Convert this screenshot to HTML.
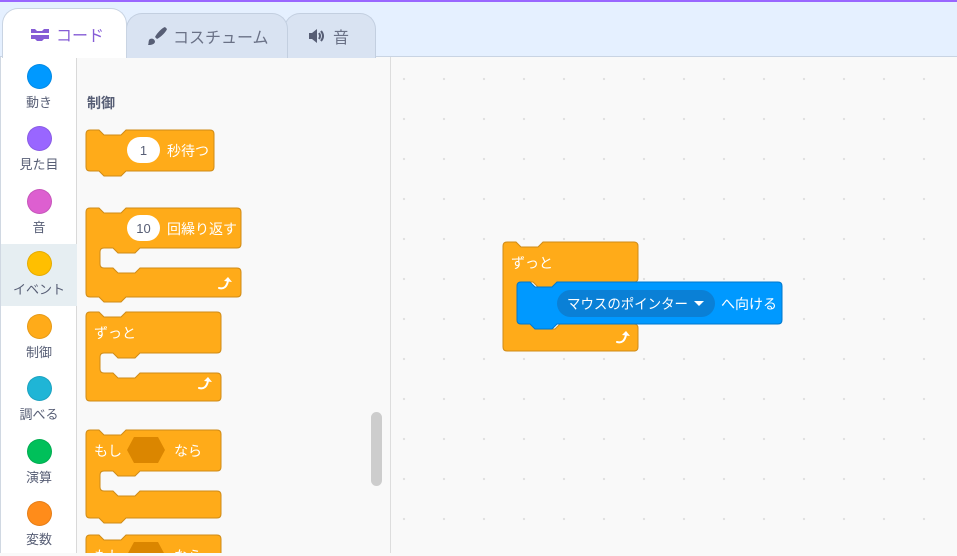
<!DOCTYPE html>
<html><head><meta charset="utf-8"><style>
*{margin:0;padding:0;box-sizing:border-box}
body{width:957px;height:553px;overflow:hidden;position:relative;background:#f9f9f9;font-family:"Liberation Sans","Noto Sans CJK JP",sans-serif}
#top{position:absolute;left:0;top:0;width:957px;height:57px;background:#e5f0ff;border-top:2px solid #9966ff;border-bottom:1px solid #c9d4e3}
.tab{position:absolute;border:1px solid #c3cfe0;border-bottom:none;border-radius:16px 16px 0 0;background:#d9e3f2;color:#6a7186;font-size:16px;display:flex;align-items:center}
#cat{position:absolute;left:0;top:57px;width:77px;height:496px;background:#fff;border-right:1px solid #d9d9d9;border-left:1px solid #d0d8e2}
.c{position:absolute;left:0;width:76px;height:62px;text-align:center;font-size:13px;color:#575e75}
.c i{display:block;width:25px;height:25px;border-radius:50%;margin:7px auto 3px;border:1px solid rgba(0,0,0,.1)}
#ws{position:absolute;left:390px;top:57px;width:567px;height:496px;border-left:1px solid #ddd;background-color:#f9f9f9;background-image:radial-gradient(circle,#e0e0e0 1px,transparent 1.3px);background-size:40px 40px;background-position:-7px 2px}
svg{position:absolute;left:0;top:0}
</style></head><body>
<div id="top">
 <div class="tab" style="left:2px;top:6px;width:125px;height:50px;background:#fff;color:#855cd6;z-index:3;border-color:#c9d4e3">
  <svg style="position:static;margin-left:27px;margin-right:6px" width="20" height="16" viewBox="0 0 20 16"><path d="M1 3h4l2 2h5l2-2h5v4h-18z M1 9h18v4h-5l-2 2h-5l-2-2h-4z" fill="#855cd6"/></svg>コード</div>
 <div class="tab" style="left:126px;top:11px;width:162px;height:45px;z-index:2">
  <svg style="position:static;margin-left:20px;margin-right:6px" width="20" height="20" viewBox="0 0 20 20"><path d="M18 1c-3 1-8 6-10 10l2 2c4-2 9-7 10-10z M3 13c2-1 5 0 5 3-1 3-5 3-7 3 1-1 0-5 2-6z" fill="#575e75"/></svg>コスチューム</div>
 <div class="tab" style="left:284px;top:11px;width:92px;height:45px;z-index:1">
  <svg style="position:static;margin-left:22px;margin-right:6px" width="20" height="16" viewBox="0 0 20 16"><path d="M2 5h3l5-4v14l-5-4h-3z" fill="#575e75"/><path d="M12 5q2 3 0 6M14 3q4 5 0 10" stroke="#575e75" stroke-width="2" fill="none"/></svg>音</div>
</div>
<div id="cat">
 <div class="c" style="top:0"><i style="background:#0099ff"></i>動き</div>
 <div class="c" style="top:62px"><i style="background:#9966ff"></i>見た目</div>
 <div class="c" style="top:125px"><i style="background:#dd5fd0"></i>音</div>
 <div class="c" style="top:187px;background:#e6eef2"><i style="background:#ffbf00"></i>イベント</div>
 <div class="c" style="top:250px"><i style="background:#ffab19"></i>制御</div>
 <div class="c" style="top:312px"><i style="background:#1fb5d6"></i>調べる</div>
 <div class="c" style="top:375px"><i style="background:#00c05a"></i>演算</div>
 <div class="c" style="top:437px"><i style="background:#ff8c1a"></i>変数</div>
</div>
<div id="ws"></div>
<svg width="957" height="553" viewBox="0 0 957 553" font-family="Liberation Sans, Noto Sans CJK JP, sans-serif">
<text x="87" y="108" font-size="14" font-weight="bold" fill="#575e75">制御</text>
<g fill="#ffab19" stroke="#cf8b17">
<path d="M86,134 Q86,130 90,130 H99 L104,135 H121 L126,130 H210 Q214,130 214,134 V167 Q214,171 210,171 H126 L121,176 H104 L99,171 H90 Q86,171 86,167 Z"/>
<path d="M86,212 Q86,208 90,208 H99 L104,213 H121 L126,208 H237 Q241,208 241,212 V244 Q241,248 237,248 H140 L135,253 H118 L113,248 H104 Q100,248 100,252 V264 Q100,268 104,268 H113 L118,273 H135 L140,268 H237 Q241,268 241,272 V293 Q241,297 237,297 H126 L121,302 H104 L99,297 H90 Q86,297 86,293 Z"/>
<path d="M86,316 Q86,312 90,312 H99 L104,317 H121 L126,312 H217 Q221,312 221,316 V349 Q221,353 217,353 H140 L135,358 H118 L113,353 H104 Q100,353 100,357 V369 Q100,373 104,373 H113 L118,378 H135 L140,373 H217 Q221,373 221,377 V397 Q221,401 217,401 H90 Q86,401 86,397 Z"/>
<path d="M86,434 Q86,430 90,430 H99 L104,435 H121 L126,430 H217 Q221,430 221,434 V467 Q221,471 217,471 H140 L135,476 H118 L113,471 H104 Q100,471 100,475 V487 Q100,491 104,491 H113 L118,496 H135 L140,491 H217 Q221,491 221,495 V514 Q221,518 217,518 H126 L121,523 H104 L99,518 H90 Q86,518 86,514 Z"/>
<path d="M86,539 Q86,535 90,535 H99 L104,540 H121 L126,535 H217 Q221,535 221,539 V560 H86 Z"/>
<path d="M503,246 Q503,242 507,242 H516 L521,247 H538 L543,242 H634 Q638,242 638,246 V278 Q638,282 634,282 H560 L555,287 H538 L533,282 H521 Q517,282 517,286 V320 Q517,324 521,324 H533 L538,329 H555 L560,324 H634 Q638,324 638,328 V347 Q638,351 634,351 H507 Q503,351 503,347 Z"/>
</g>
<path d="M517,286 Q517,282 521,282 H530 L535,287 H552 L557,282 H778 Q782,282 782,286 V320 Q782,324 778,324 H557 L552,329 H535 L530,324 H521 Q517,324 517,320 Z" fill="#0099ff" stroke="#0077cc"/>
<rect x="127" y="137" width="33" height="26" rx="13" fill="#fff"/>
<text x="143.5" y="155" font-size="13" fill="#575e75" text-anchor="middle">1</text>
<text x="167" y="156" font-size="14" fill="#fff">秒待つ</text>
<rect x="127" y="215" width="33" height="26" rx="13" fill="#fff"/>
<text x="143.5" y="233" font-size="13" fill="#575e75" text-anchor="middle">10</text>
<text x="167" y="234" font-size="14" fill="#fff">回繰り返す</text>
<text x="94" y="338" font-size="14" fill="#fff">ずっと</text>
<text x="94" y="456" font-size="14" fill="#fff">もし</text>
<path d="M127,450 L134,437 H158 L165,450 L158,463 H134 Z" fill="#db8600"/>
<text x="174" y="456" font-size="14" fill="#fff">なら</text>
<text x="94" y="561" font-size="14" fill="#fff">もし</text>
<path d="M127,555 L134,542 H158 L165,555 L158,568 H134 Z" fill="#db8600"/>
<text x="174" y="561" font-size="14" fill="#fff">なら</text>
<g fill="none" stroke="#fff" stroke-width="2" stroke-linecap="round">
<path d="M219,288 Q226,290 228,281"/><path d="M199,388 Q206,390 208,381"/><path d="M617,342 Q624,344 626,335"/>
</g>
<g fill="#fff"><path d="M224,281 L228,277 L232,282 Z"/><path d="M204,381 L208,377 L212,382 Z"/><path d="M622,335 L626,331 L630,336 Z"/></g>
<text x="511" y="268" font-size="14" fill="#fff">ずっと</text>
<rect x="557" y="290" width="158" height="27" rx="13.5" fill="#0a80d6"/>
<text x="567" y="309" font-size="14" fill="#fff" textLength="121" lengthAdjust="spacingAndGlyphs">マウスのポインター</text>
<path d="M694,301 H704 L699,306 Z" fill="#fff"/>
<text x="721" y="309" font-size="14" fill="#fff">へ向ける</text>
<rect x="371" y="412" width="11" height="74" rx="5.5" fill="#cdcdcd"/>
</svg>
</body></html>
